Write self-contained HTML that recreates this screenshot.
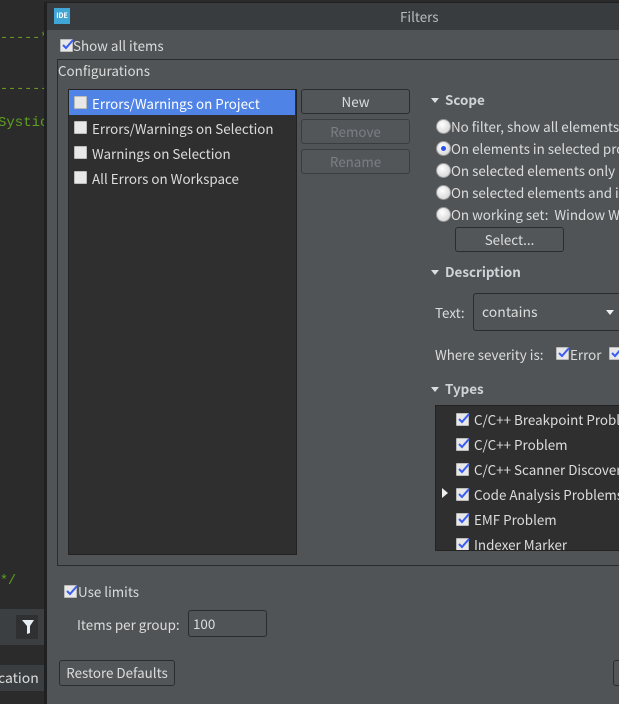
<!DOCTYPE html><html><head><style>
html,body{margin:0;width:619px;height:704px;overflow:hidden}
body{background:#2b2b2b;font-family:"Noto Sans CJK JP","DejaVu Sans",sans-serif;font-size:13.4px;line-height:16px;color:#dcdcdc;position:relative}
#w{position:absolute;left:0;top:0;width:619px;height:704px;overflow:hidden}
.a{position:absolute;white-space:nowrap}
.cb{position:absolute;width:11px;height:11px;background:#e8e8e8;border:1px solid #bbb;border-radius:1px}
.cb svg{position:absolute;left:0;top:-2px}
.rb{position:absolute;width:13px;height:13px;border-radius:50%;background:radial-gradient(circle at 40% 35%,#fff,#ccc);border:1px solid #999}
.rb.on::after{content:"";position:absolute;left:4px;top:4px;width:5px;height:5px;border-radius:50%;background:#2b4ff0}
.btn{position:absolute;border:1px solid #2a2c2e;border-radius:3px;background:#535659;text-align:center;line-height:23px}
.tri{position:absolute;width:0;height:0;border-left:4px solid transparent;border-right:4px solid transparent;border-top:5px solid #ddd}
.hd{font-weight:bold;color:#cfd3d6}
</style></head><body><div id="w">
<div class="a" style="left:0;top:31px;color:#6a9a1f;font-family:'Liberation Mono',monospace">-----*</div>
<div class="a" style="left:0;top:82px;color:#6a9a1f;font-family:'Liberation Mono',monospace">------</div>
<div class="a" style="left:-2px;top:115px;color:#5fa01e;font-family:'Liberation Mono',monospace;font-size:14px">Systic</div>
<div class="a" style="left:0;top:574px;color:#5fa01e;font-family:'Liberation Mono',monospace">*/</div>
<div class="a" style="left:0;top:609px;width:44px;height:36px;background:#3c3f41"></div>
<div class="a" style="left:16px;top:615px;width:22px;height:24px;background:#2e3032"></div>
<svg class="a" style="left:21px;top:618px" width="14" height="17"><path d="M1 2H13L9 8V15L6 16V8Z" fill="#e8eef5"/></svg>
<div class="a" style="left:0;top:665px;width:44px;height:26px;background:#3b3e40;font-size:14px;line-height:26px;color:#ddd"><span style="margin-left:-2px">cation</span></div>
<div class="a" style="left:44px;top:2px;width:575px;height:702px;background:#1f2022"></div>
<div class="a" style="left:47px;top:3px;width:572px;height:27px;background:#393c3e"></div>
<div class="a" style="left:54px;top:8px;width:16px;height:16px;background:#3fa6d6;color:#fff;font-size:7px;font-weight:bold;line-height:16px;text-align:center">IDE</div>
<div class="a" style="left:400px;top:8px;color:#b8bcc0">Filters</div>
<div class="a" style="left:47px;top:30px;width:572px;height:674px;background:#505457"></div>
<div class="cb" style="left:60px;top:39px"><svg width="14" height="14"><path d="M2 7L5 10L12 2" stroke="#3a5cf0" stroke-width="2" fill="none"/></svg></div>
<div class="a" style="left:73px;top:37px">Show all items</div>
<div class="a" style="left:57px;top:59px;width:570px;height:505px;border:1px solid #2a2c2e;border-right:none"></div>
<div class="a" style="left:58px;top:62px">Configurations</div>
<div class="a" style="left:68px;top:89px;width:227px;height:464px;background:#2f2f2f;border:1px solid #232323"></div>
<div class="a" style="left:69px;top:90px;width:226px;height:25px;background:#5083e6"></div>
<div class="cb" style="left:74px;top:96px"></div><div class="a" style="left:92px;top:95px;color:#fff">Errors/Warnings on Project</div>
<div class="cb" style="left:74px;top:121px"></div><div class="a" style="left:92px;top:120px">Errors/Warnings on Selection</div>
<div class="cb" style="left:74px;top:146px"></div><div class="a" style="left:92px;top:145px">Warnings on Selection</div>
<div class="cb" style="left:74px;top:171px"></div><div class="a" style="left:92px;top:170px">All Errors on Workspace</div>
<div class="btn" style="left:301px;top:89px;width:107px;height:23px">New</div>
<div class="btn" style="left:301px;top:119px;width:107px;height:23px;color:#7b7f83;border-color:#3a3c3e">Remove</div>
<div class="btn" style="left:301px;top:149px;width:107px;height:23px;color:#7b7f83;border-color:#3a3c3e">Rename</div>
<div class="tri" style="left:431px;top:98px"></div><div class="a hd" style="left:445px;top:91px">Scope</div>
<div class="rb" style="left:436px;top:119px"></div><div class="a" style="left:451px;top:118px">No filter, show all elements</div>
<div class="rb on" style="left:436px;top:141px"></div><div class="a" style="left:451px;top:140px">On elements in selected project</div>
<div class="rb" style="left:436px;top:163px"></div><div class="a" style="left:451px;top:162px">On selected elements only</div>
<div class="rb" style="left:436px;top:185px"></div><div class="a" style="left:451px;top:184px">On selected elements and its children</div>
<div class="rb" style="left:436px;top:207px"></div><div class="a" style="left:451px;top:206px">On working set:&nbsp; Window Working Set</div>
<div class="btn" style="left:455px;top:227px;width:107px;height:23px">Select...</div>
<div class="tri" style="left:431px;top:270px"></div><div class="a hd" style="left:445px;top:263px">Description</div>
<div class="a" style="left:435px;top:304px">Text:</div>
<div class="a" style="left:473px;top:293px;width:150px;height:36px;border:1px solid #2a2c2e;border-radius:3px"></div>
<div class="a" style="left:482px;top:304px;font-size:14px">contains</div>
<div class="tri" style="left:606px;top:310px;border-top-color:#eee"></div>
<div class="a" style="left:435px;top:346px">Where severity is:</div>
<div class="cb" style="left:556px;top:347px"><svg width="14" height="14"><path d="M2 7L5 10L12 2" stroke="#3a5cf0" stroke-width="2" fill="none"/></svg></div><div class="a" style="left:570px;top:346px">Error</div>
<div class="cb" style="left:609px;top:347px"><svg width="14" height="14"><path d="M2 7L5 10L12 2" stroke="#3a5cf0" stroke-width="2" fill="none"/></svg></div>
<div class="tri" style="left:431px;top:387px"></div><div class="a hd" style="left:445px;top:380px">Types</div>
<div class="a" style="left:435px;top:405px;width:190px;height:144px;background:#2f2f2f;border:1px solid #232323;overflow:hidden">
<div class="cb" style="left:20px;top:7px"><svg width="14" height="14"><path d="M2 7L5 10L12 2" stroke="#3a5cf0" stroke-width="2" fill="none"/></svg></div><div class="a" style="left:38px;top:5px">C/C++ Breakpoint Problem</div>
<div class="cb" style="left:20px;top:32px"><svg width="14" height="14"><path d="M2 7L5 10L12 2" stroke="#3a5cf0" stroke-width="2" fill="none"/></svg></div><div class="a" style="left:38px;top:30px">C/C++ Problem</div>
<div class="cb" style="left:20px;top:57px"><svg width="14" height="14"><path d="M2 7L5 10L12 2" stroke="#3a5cf0" stroke-width="2" fill="none"/></svg></div><div class="a" style="left:38px;top:55px">C/C++ Scanner Discovery</div>
<div class="a" style="left:6px;top:82px;border-top:5px solid transparent;border-bottom:5px solid transparent;border-left:6px solid #eee"></div>
<div class="cb" style="left:20px;top:82px"><svg width="14" height="14"><path d="M2 7L5 10L12 2" stroke="#3a5cf0" stroke-width="2" fill="none"/></svg></div><div class="a" style="left:38px;top:80px">Code Analysis Problems</div>
<div class="cb" style="left:20px;top:107px"><svg width="14" height="14"><path d="M2 7L5 10L12 2" stroke="#3a5cf0" stroke-width="2" fill="none"/></svg></div><div class="a" style="left:38px;top:105px">EMF Problem</div>
<div class="cb" style="left:20px;top:132px"><svg width="14" height="14"><path d="M2 7L5 10L12 2" stroke="#3a5cf0" stroke-width="2" fill="none"/></svg></div><div class="a" style="left:38px;top:130px">Indexer Marker</div>
</div>
<div class="cb" style="left:64px;top:585px"><svg width="14" height="14"><path d="M2 7L5 10L12 2" stroke="#3a5cf0" stroke-width="2" fill="none"/></svg></div><div class="a" style="left:78px;top:583px">Use limits</div>
<div class="a" style="left:77px;top:616px">Items per group:</div>
<div class="a" style="left:188px;top:610px;width:77px;height:25px;border:1px solid #2a2c2e;border-radius:3px;line-height:25px"><span style="margin-left:4px">100</span></div>
<div class="btn" style="left:59px;top:660px;width:114px;height:24px">Restore Defaults</div>
<div class="btn" style="left:613px;top:660px;width:20px;height:24px"></div>
</div></body></html>
